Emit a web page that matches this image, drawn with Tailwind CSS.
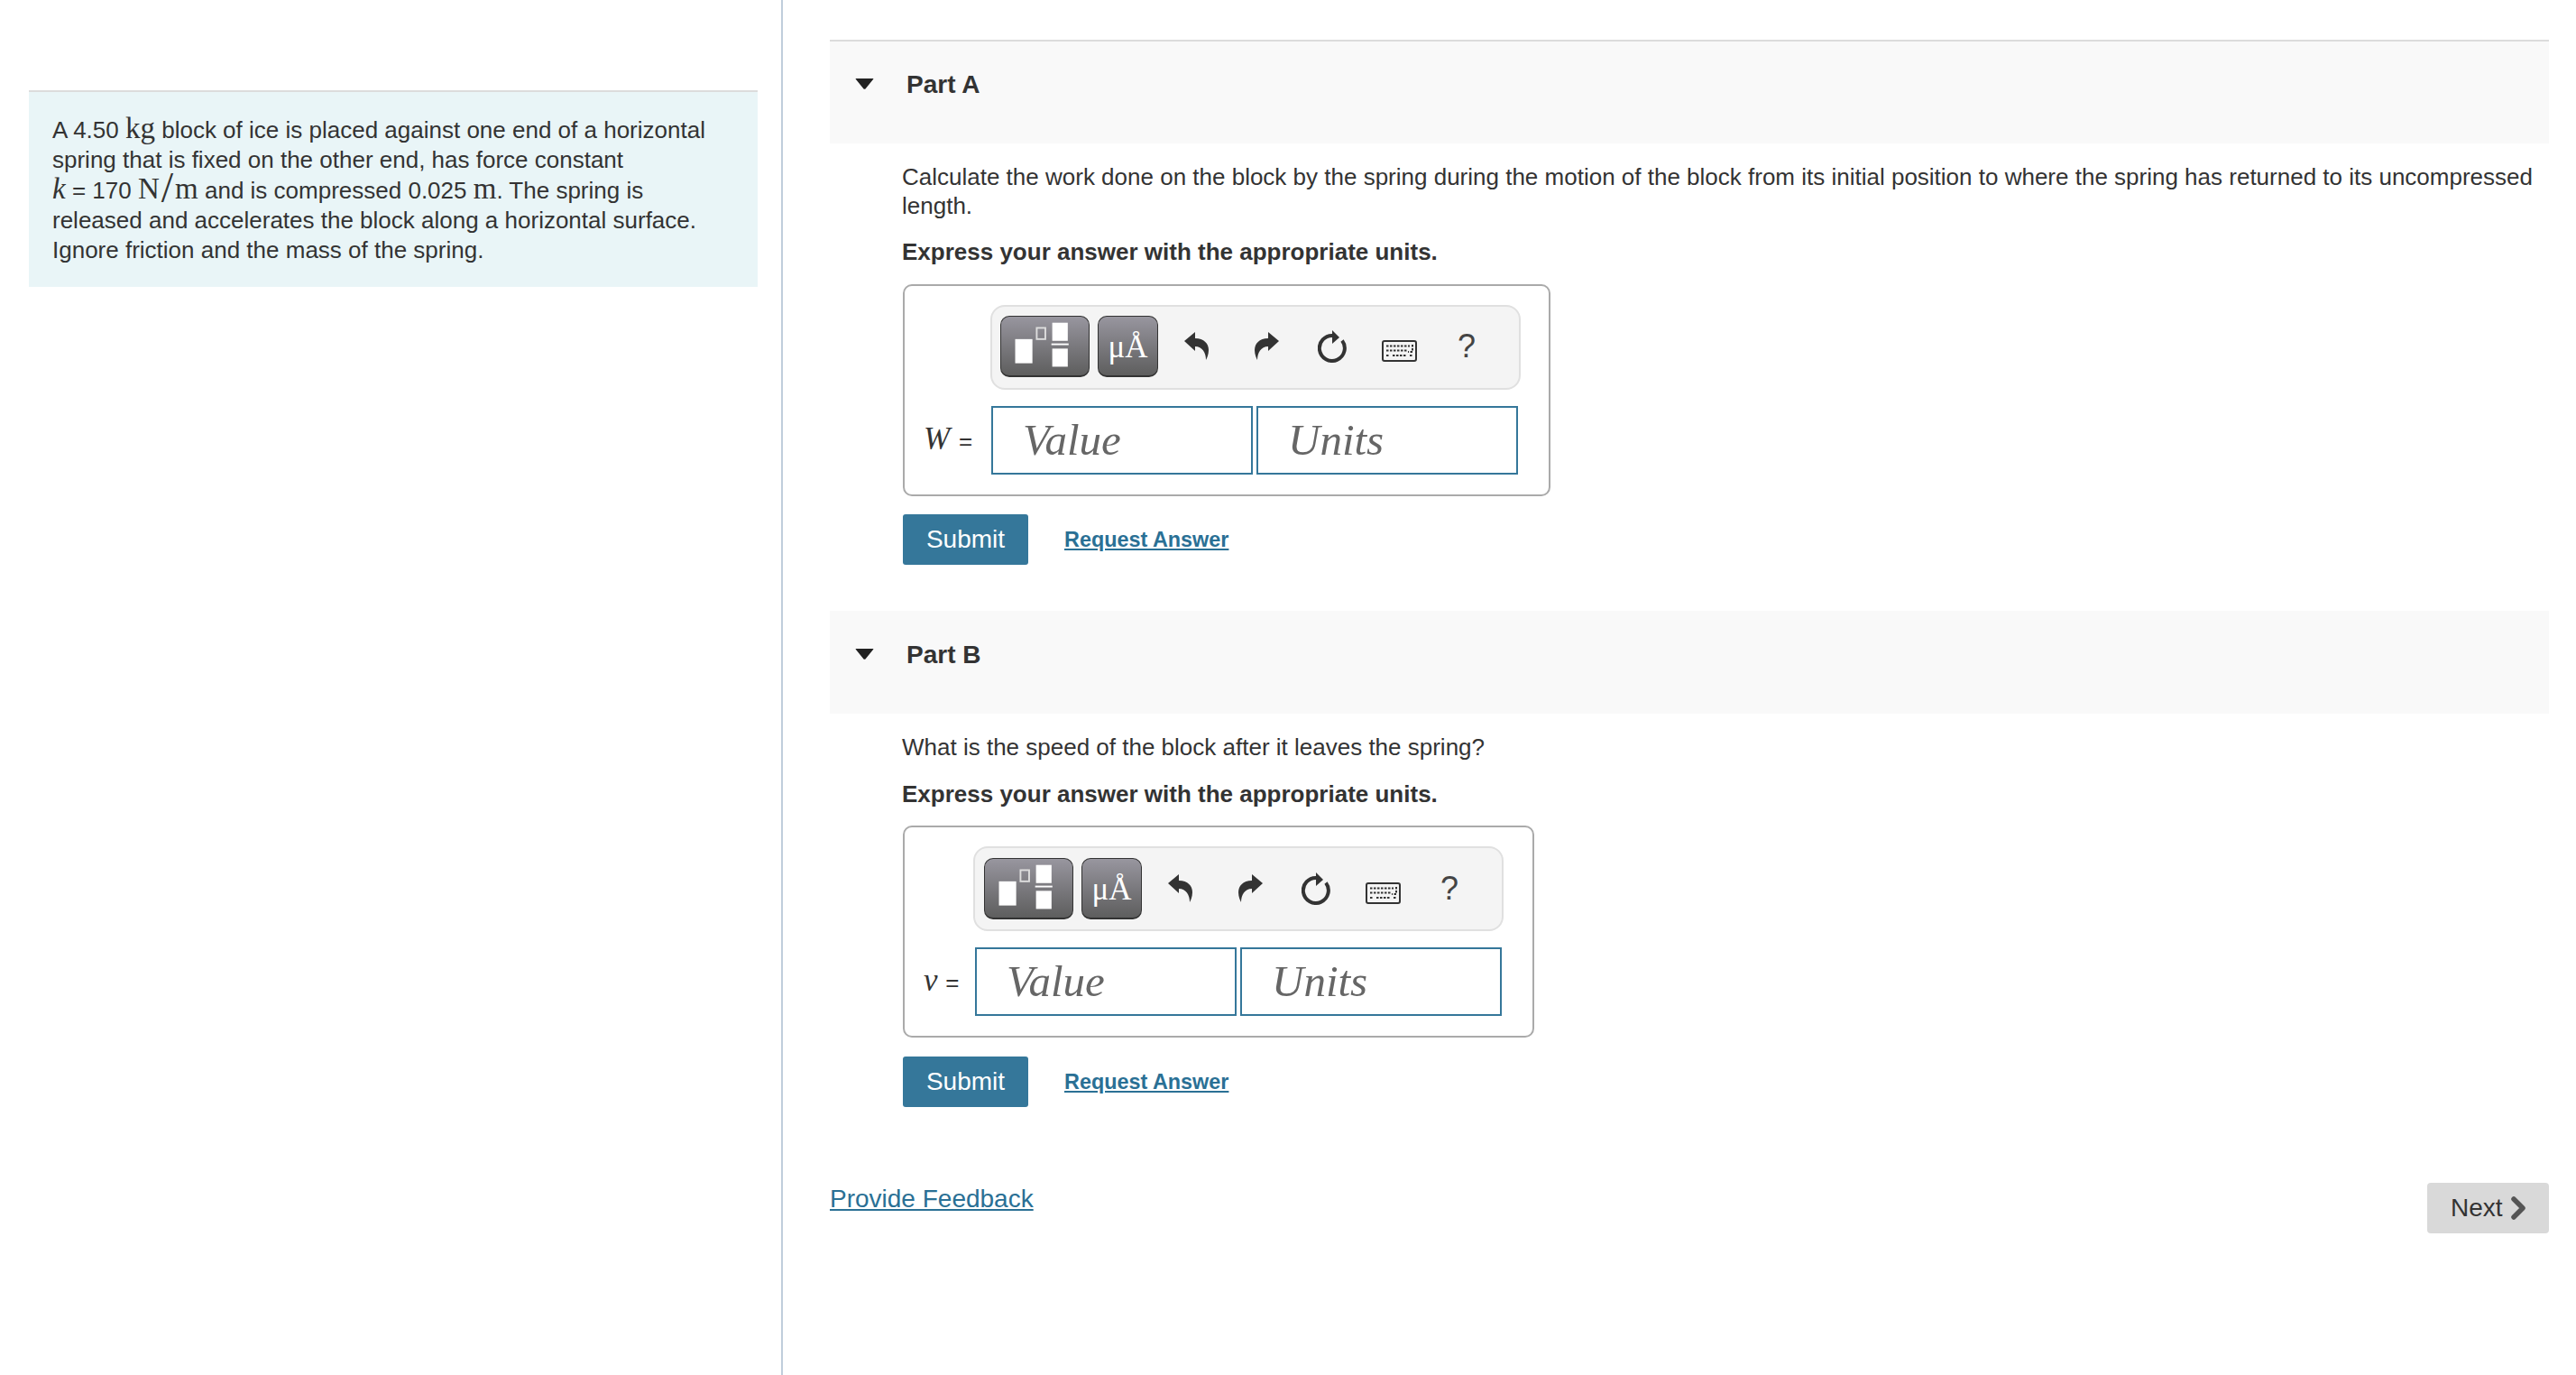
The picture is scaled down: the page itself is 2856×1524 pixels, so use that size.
<!DOCTYPE html>
<html lang="en">
  <head>
    <meta charset="UTF-8" />
    <title>Part A and Part B</title>
    <script src="https://cdn.jsdelivr.net/npm/@tailwindcss/browser@4"></script>
  </head>
  <body class="bg-white text-[#333] font-['Liberation_Sans',sans-serif] text-[26px] leading-[32px]">
    <div class="flex h-[1524px] overflow-hidden">
      <!-- problem statement -->
      <div class="w-[868px] shrink-0 border-r-2 border-[#bfcddb] pt-[100px] pl-[32px]">
        <div class="w-[808px] h-[218px] bg-[#e9f5f7] border-t-2 border-[#dcdcdc] pl-[26px] pt-[26px] leading-[33.3px]">
          A 4.50 <span class="font-['Liberation_Serif',serif] text-[33px] leading-[26px]">kg</span> block of ice is placed against one end of a horizontal<br />
          spring that is fixed on the other end, has force constant<br />
          <span class="font-['Liberation_Serif',serif] italic text-[33px] leading-[26px]">k</span> = 170 <span class="font-['Liberation_Serif',serif] text-[33px] leading-[26px]">N<span class="mx-[2px] text-[48px] leading-[26px] align-[-4px]">/</span>m</span> and is compressed 0.025 <span class="font-['Liberation_Serif',serif] text-[33px] leading-[26px]">m</span>. The spring is<br />
          released and accelerates the block along a horizontal surface.<br />
          Ignore friction and the mass of the spring.
        </div>
      </div>

      <div class="flex-1 pl-[52px] pr-[30px] pt-[44px]">
        <!-- part A -->
        <div class="h-[115px] bg-[#f9f9f9] border-t-2 border-[#dcdcdc] flex items-start pt-[32px] pl-[28px] font-bold text-[28px]">
          <svg class="mt-[9px] mr-[36px]" width="21" height="12" viewBox="0 0 21 12"><path d="M1 0H20Q21 0 20 1L11.500 11.500Q10.500 12 9.500 11.500L1 1Q0 0 1 0Z" fill="#222" /></svg>
          <span>Part A</span>
        </div>
        <div class="pl-[81px]">
          <p class="pt-[21px] -ml-px">Calculate the work done on the block by the spring during the motion of the block from its initial position to where the spring has returned to its uncompressed length.</p>
          <p class="pt-[19px] -ml-px font-bold">Express your answer with the appropriate units.</p>
          <div class="mt-[20px] w-[718px] h-[235px] border-2 border-[#aaa] rounded-[10px] pt-[21px] pl-[22px] grid grid-cols-[73px_588px] grid-rows-[94px_76px] gap-y-[18px]">
            <div class="col-start-2 rounded-[16px] border-2 border-[#e0e0e0] bg-[#f4f4f4] flex items-start pl-[9px] pt-[10px]">
              <svg class="rounded-[10px] border-b-2 border-x border-t border-[#333] bg-gradient-to-b from-[#98969f] to-[#5e5e5e]" width="99" height="68" viewBox="0 0 99 68">
                <rect x="15" y="26" width="20" height="28" fill="#fff" />
                <rect x="40" y="13" width="10" height="13" fill="none" stroke="#ddd" stroke-width="2" />
                <rect x="58" y="7" width="18" height="21" fill="#fff" />
                <rect x="57" y="31" width="20" height="2" fill="#fff" />
                <rect x="58" y="37" width="18" height="21" fill="#fff" />
              </svg>
              <div class="ml-[9px] w-[67px] h-[68px] rounded-[10px] border-b-2 border-x border-t border-[#333] bg-gradient-to-b from-[#98969f] to-[#5e5e5e] text-white font-['Liberation_Serif',serif] font-normal text-[35px] leading-[68px] text-center">μÅ</div>
              <svg class="ml-[29px] mt-[18px]" width="27" height="31" viewBox="0 0 27 31"><path d="M0 10L12 0V7C22 7 27 13 27 20C27 25 25 29 24 31C24 23 20 16 12 16V21Z" fill="#333" /></svg>
              <svg class="ml-[51px] mt-[18px]" width="27" height="31" viewBox="0 0 27 31"><path d="M27 10L15 0V7C5 7 0 13 0 20C0 25 2 29 3 31C3 23 7 16 15 16V21Z" fill="#333" /></svg>
              <svg class="ml-[43px] mt-[16px]" width="32" height="36" viewBox="0 0 32 36"><path d="M17 6A14 14 0 1 0 27 11.500" fill="none" stroke="#333" stroke-width="4" /><path d="M16 0L24 8L16 15Z" fill="#333" /></svg>
              <svg class="ml-[39px] mt-[27px]" width="39" height="24" viewBox="0 0 39 24"><rect x="1" y="1" width="37" height="22" rx="2" fill="#f4f4f4" stroke="#333" stroke-width="2" /><path d="M5 6.500H31M5 11.500H28M5 17H8M12 17H28M31 17H34M34 5V13H29" fill="none" stroke="#333" stroke-width="2" stroke-dasharray="2.500 1.500" /></svg>
              <span class="ml-[45px] mt-[14px] text-[36px] leading-[40px] font-normal text-[#444]">?</span>
            </div>
            <div class="col-start-1 row-start-2 self-center -ml-px font-['Liberation_Serif',serif] text-[35px] leading-[40px]"><i>W</i> <span class="ml-px font-['Liberation_Sans',sans-serif] text-[26px]">=</span></div>
            <div class="col-start-2 row-start-2 flex gap-[4px] ml-[1px]">
              <div class="w-[290px] h-[76px] border-2 border-[#35779a] pl-[33px] font-['Liberation_Serif',serif] italic text-[49px] leading-[72px] text-[#666]">Value</div>
              <div class="w-[290px] h-[76px] border-2 border-[#35779a] pl-[33px] font-['Liberation_Serif',serif] italic text-[49px] leading-[72px] text-[#666]">Units</div>
            </div>
          </div>
          <div class="mt-[20px] flex items-center">
            <button class="w-[139px] h-[56px] rounded-[3px] bg-[#35779a] text-white text-[28px]">Submit</button>
            <a href="#" class="ml-[40px] text-[23.400px] font-bold text-[#2a7095] underline">Request Answer</a>
          </div>
        </div>

        <!-- part B -->
        <div class="mt-[51px] h-[114px] bg-[#f9f9f9] flex items-start pt-[33px] pl-[28px] font-bold text-[28px]">
          <svg class="mt-[9px] mr-[36px]" width="21" height="12" viewBox="0 0 21 12"><path d="M1 0H20Q21 0 20 1L11.500 11.500Q10.500 12 9.500 11.500L1 1Q0 0 1 0Z" fill="#222" /></svg>
          <span>Part B</span>
        </div>
        <div class="pl-[81px]">
          <p class="pt-[21px] -ml-px">What is the speed of the block after it leaves the spring?</p>
          <p class="pt-[20px] -ml-px font-bold">Express your answer with the appropriate units.</p>
          <div class="mt-[19px] w-[700px] h-[235px] border-2 border-[#aaa] rounded-[10px] pt-[21px] pl-[21px] grid grid-cols-[55px_588px] grid-rows-[94px_76px] gap-y-[18px]">
            <div class="col-start-2 rounded-[16px] border-2 border-[#e0e0e0] bg-[#f4f4f4] flex items-start pl-[10px] pt-[11px]">
              <svg class="rounded-[10px] border-b-2 border-x border-t border-[#333] bg-gradient-to-b from-[#98969f] to-[#5e5e5e]" width="99" height="68" viewBox="0 0 99 68">
                <rect x="15" y="26" width="20" height="28" fill="#fff" />
                <rect x="40" y="13" width="10" height="13" fill="none" stroke="#ddd" stroke-width="2" />
                <rect x="58" y="7" width="18" height="21" fill="#fff" />
                <rect x="57" y="31" width="20" height="2" fill="#fff" />
                <rect x="58" y="37" width="18" height="21" fill="#fff" />
              </svg>
              <div class="ml-[9px] w-[67px] h-[68px] rounded-[10px] border-b-2 border-x border-t border-[#333] bg-gradient-to-b from-[#98969f] to-[#5e5e5e] text-white font-['Liberation_Serif',serif] font-normal text-[35px] leading-[68px] text-center">μÅ</div>
              <svg class="ml-[29px] mt-[18px]" width="27" height="31" viewBox="0 0 27 31"><path d="M0 10L12 0V7C22 7 27 13 27 20C27 25 25 29 24 31C24 23 20 16 12 16V21Z" fill="#333" /></svg>
              <svg class="ml-[51px] mt-[18px]" width="27" height="31" viewBox="0 0 27 31"><path d="M27 10L15 0V7C5 7 0 13 0 20C0 25 2 29 3 31C3 23 7 16 15 16V21Z" fill="#333" /></svg>
              <svg class="ml-[43px] mt-[16px]" width="32" height="36" viewBox="0 0 32 36"><path d="M17 6A14 14 0 1 0 27 11.500" fill="none" stroke="#333" stroke-width="4" /><path d="M16 0L24 8L16 15Z" fill="#333" /></svg>
              <svg class="ml-[39px] mt-[27px]" width="39" height="24" viewBox="0 0 39 24"><rect x="1" y="1" width="37" height="22" rx="2" fill="#f4f4f4" stroke="#333" stroke-width="2" /><path d="M5 6.500H31M5 11.500H28M5 17H8M12 17H28M31 17H34M34 5V13H29" fill="none" stroke="#333" stroke-width="2" stroke-dasharray="2.500 1.500" /></svg>
              <span class="ml-[44px] mt-[14px] text-[36px] leading-[40px] font-normal text-[#444]">?</span>
            </div>
            <div class="col-start-1 row-start-2 self-center font-['Liberation_Serif',serif] text-[35px] leading-[40px]"><i>v</i> <span class="font-['Liberation_Sans',sans-serif] text-[26px]">=</span></div>
            <div class="col-start-2 row-start-2 flex gap-[4px] ml-[2px]">
              <div class="w-[290px] h-[76px] border-2 border-[#35779a] pl-[33px] font-['Liberation_Serif',serif] italic text-[49px] leading-[72px] text-[#666]">Value</div>
              <div class="w-[290px] h-[76px] border-2 border-[#35779a] pl-[33px] font-['Liberation_Serif',serif] italic text-[49px] leading-[72px] text-[#666]">Units</div>
            </div>
          </div>
          <div class="mt-[21px] flex items-center">
            <button class="w-[139px] h-[56px] rounded-[3px] bg-[#35779a] text-white text-[28px]">Submit</button>
            <a href="#" class="ml-[40px] text-[23.400px] font-bold text-[#2a7095] underline">Request Answer</a>
          </div>
        </div>

        <!-- footer links -->
        <div class="mt-[84px] flex justify-between items-start">
          <a href="#" class="mt-[1px] text-[28px] leading-[34px] text-[#2a7095] underline">Provide Feedback</a>
          <button class="w-[135px] h-[56px] rounded-[4px] bg-[#d9d9d9] flex items-center pl-[26px] text-[28px]">
            <span>Next</span>
            <svg class="ml-[9px]" width="17" height="26" viewBox="0 0 17 26"><path d="M3 3L13 13L3 23" fill="none" stroke="#555" stroke-width="5.500" stroke-linejoin="round" stroke-linecap="round" /></svg>
          </button>
        </div>
      </div>
    </div>
  </body>
</html>
